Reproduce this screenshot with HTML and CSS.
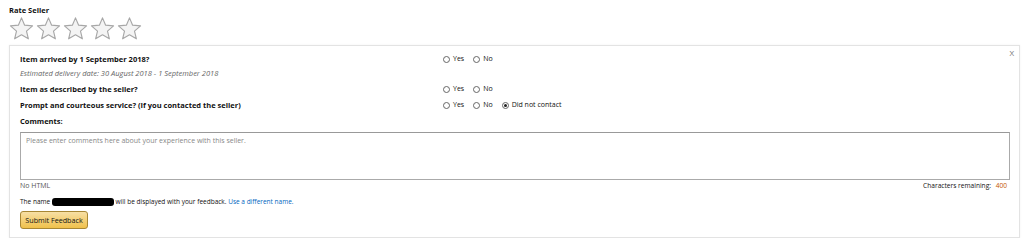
FILE: index.html
```html
<!DOCTYPE html>
<html lang="en">
<head>
  <meta charset="UTF-8">
  <title>Rate Seller</title>
  <link rel="stylesheet" href="styles.css">
</head>
<body>
  <div class="rate">
    <h3>Rate Seller</h3>
    <div class="stars">
      <svg class="star" viewBox="0 0 24 24"><path d="M12 1.8l3 7 7.6.7-5.8 5 1.8 7.4L12 18l-6.6 3.9 1.8-7.4-5.8-5 7.6-.7z"/></svg>
      <svg class="star" viewBox="0 0 24 24"><path d="M12 1.8l3 7 7.6.7-5.8 5 1.8 7.4L12 18l-6.6 3.9 1.8-7.4-5.8-5 7.6-.7z"/></svg>
      <svg class="star" viewBox="0 0 24 24"><path d="M12 1.8l3 7 7.6.7-5.8 5 1.8 7.4L12 18l-6.6 3.9 1.8-7.4-5.8-5 7.6-.7z"/></svg>
      <svg class="star" viewBox="0 0 24 24"><path d="M12 1.8l3 7 7.6.7-5.8 5 1.8 7.4L12 18l-6.6 3.9 1.8-7.4-5.8-5 7.6-.7z"/></svg>
      <svg class="star" viewBox="0 0 24 24"><path d="M12 1.8l3 7 7.6.7-5.8 5 1.8 7.4L12 18l-6.6 3.9 1.8-7.4-5.8-5 7.6-.7z"/></svg>
    </div>
  </div>

  <div class="feedback">
    <span class="close">X</span>

    <div class="question">
      <div class="label">Item arrived by 1 September 2018?</div>
      <div class="options">
        <label><span class="radio"></span>Yes</label>
        <label><span class="radio"></span>No</label>
      </div>
    </div>
    <div class="estimate">Estimated delivery date: 30 August 2018 - 1 September 2018</div>

    <div class="question">
      <div class="label">Item as described by the seller?</div>
      <div class="options">
        <label><span class="radio"></span>Yes</label>
        <label><span class="radio"></span>No</label>
      </div>
    </div>

    <div class="question">
      <div class="label">Prompt and courteous service? (If you contacted the seller)</div>
      <div class="options">
        <label><span class="radio"></span>Yes</label>
        <label><span class="radio"></span>No</label>
        <label><span class="radio checked"></span>Did not contact</label>
      </div>
    </div>

    <div class="label comments-label">Comments:</div>
    <div class="comments">Please enter comments here about your experience with this seller.</div>
    <div class="hint-row">
      <span>No HTML</span>
      <span class="remaining">Characters remaining: <b>400</b></span>
    </div>

    <p class="name-line">The name <span class="redacted"></span> will be displayed with your feedback. <a href="#">Use a different name.</a></p>

    <button class="submit">Submit Feedback</button>
  </div>
</body>
</html>
```

FILE: styles.css
```css
* {
  margin: 0;
  padding: 0;
  box-sizing: border-box;
}

body {
  font-family: "Open Sans", Arial, sans-serif;
  font-size: 7px;
  color: #111;
  background: #fff;
  padding: 5px 4px 0 9px;
}

.rate h3 {
  font-size: 7.5px;
  font-weight: bold;
  line-height: 10px;
}

.stars {
  display: flex;
  gap: 2px;
  margin-top: 1px;
}

.star {
  width: 25px;
  height: 25px;
}

.star path {
  fill: #f4f4f4;
  stroke: #a7a7a7;
  stroke-width: 1.1;
  stroke-linejoin: round;
}

.feedback {
  position: relative;
  margin-top: 4px;
  border: 1px solid #e3e3e3;
  box-shadow: 0 0 2px rgba(0, 0, 0, 0.06);
  padding: 8px 9px 7px 10px;
  height: 193px;
}

.close {
  position: absolute;
  right: 5px;
  top: 1px;
  color: #777;
  font-size: 8px;
}

.question {
  display: grid;
  grid-template-columns: 423px 1fr;
  align-items: center;
  line-height: 10px;
  margin-bottom: 6px;
}

.label {
  font-weight: bold;
  font-size: 7.5px;
}

.options {
  display: flex;
  gap: 9px;
}

.options label {
  display: flex;
  align-items: center;
  gap: 3px;
}

.radio {
  width: 7px;
  height: 7px;
  border: 1px solid #666;
  border-radius: 50%;
  display: inline-block;
  position: relative;
}

.radio.checked::after {
  content: "";
  position: absolute;
  left: 1px;
  top: 1px;
  width: 3px;
  height: 3px;
  border-radius: 50%;
  background: #222;
}

.estimate {
  font-style: italic;
  font-size: 7.5px;
  color: #666;
  line-height: 10px;
  margin-top: -2px;
  margin-bottom: 6px;
}

.comments-label {
  line-height: 10px;
  margin-top: 3px;
}

.comments {
  margin-top: 6px;
  height: 48px;
  border: 1px solid #aaa;
  border-top-color: #999;
  padding: 3px 5px;
  color: #888;
  line-height: 10px;
}

.hint-row {
  display: flex;
  justify-content: space-between;
  color: #555;
  line-height: 10px;
  margin-top: 1px;
  padding-right: 3px;
}

.remaining {
  color: #111;
  font-size: 6.6px;
}

.remaining b {
  font-weight: normal;
  color: #c45500;
  margin-left: 3px;
}

.name-line {
  margin-top: 6px;
  line-height: 10px;
  font-size: 6.5px;
}

.redacted {
  display: inline-block;
  width: 62px;
  height: 8px;
  background: #000;
  border-radius: 3px;
  vertical-align: middle;
}

.name-line a {
  color: #0066c0;
  text-decoration: none;
}

.submit {
  margin-top: 4px;
  font-family: inherit;
  font-size: 7.2px;
  width: 68px;
  height: 18px;
  border: 1px solid #a88734;
  border-radius: 3px;
  background: linear-gradient(#f7dfa5, #f0c14b);
  color: #111;
  cursor: pointer;
}
```
